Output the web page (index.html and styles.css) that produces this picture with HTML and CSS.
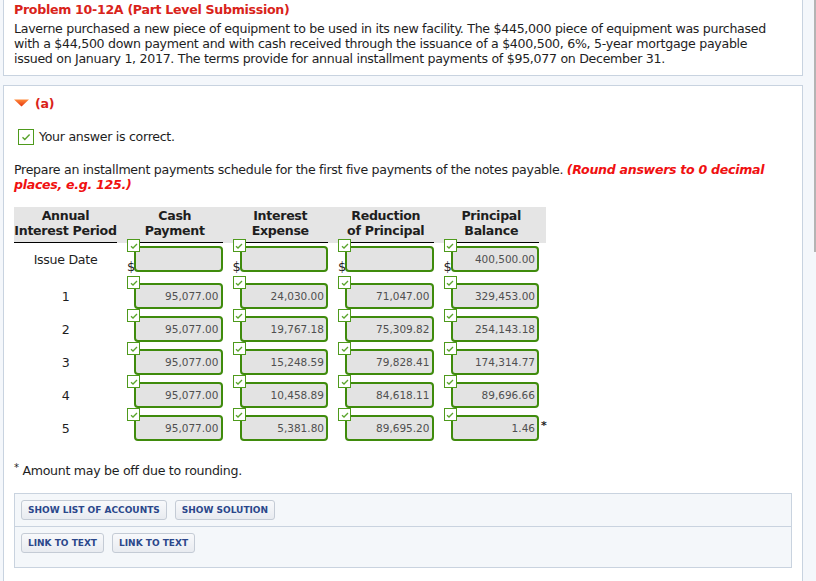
FILE: index.html
```html
<!DOCTYPE html>
<html>
<head>
<meta charset="utf-8">
<link rel="stylesheet" href="styles.css">
</head>
<body>
<div class="scroll-thumb"></div>
<div class="page">
  <div class="box box-top">
    <h1 class="title">Problem 10-12A (Part Level Submission)</h1>
    <p class="intro">Laverne purchased a new piece of equipment to be used in its new facility. The $445,000 piece of equipment was purchased<br>with a $44,500 down payment and with cash received through the issuance of a $400,500, 6%, 5-year mortgage payable<br>issued on January 1, 2017. The terms provide for annual installment payments of $95,077 on December 31.</p>
  </div>
  <div class="box box-part">
    <div class="part-head">
      <svg class="tri" width="15" height="8" viewBox="0 0 15 8"><defs><linearGradient id="tg" x1="0" y1="0" x2="0" y2="1"><stop offset="0" stop-color="#ff8a3a"/><stop offset="1" stop-color="#e5330f"/></linearGradient></defs><polygon points="0,0.5 15,0.5 7.5,7.5" fill="url(#tg)"/></svg>
      <span class="part-label">(a)</span>
    </div>
    <div class="status">
      <span class="bigcheck"><svg width="12" height="12" viewBox="0 0 12 12"><path d="M2.5 6.2 L4.8 8.4 L9.6 3.6" fill="none" stroke="#56a22a" stroke-width="1.4"/></svg></span>
      <span>Your answer is correct.</span>
    </div>
    <p class="prompt">Prepare an installment payments schedule for the first five payments of the notes payable. <em class="note">(Round answers to 0 decimal<br>places, e.g. 125.)</em></p>

    <div class="schedule">
      <div class="grid head">
        <div class="hc first"><div class="hi">Annual<br>Interest Period</div></div>
        <div class="hc"><div class="hi">Cash<br>Payment</div></div>
        <div class="hc"><div class="hi">Interest<br>Expense</div></div>
        <div class="hc"><div class="hi">Reduction<br>of Principal</div></div>
        <div class="hc"><div class="hi">Principal<br>Balance</div></div>
        <div class="hc spacer"></div>
      </div>

      <div class="grid row row-first">
        <div class="lbl">Issue Date</div>
        <div class="cell"><span class="cur">$</span><div class="fld"><span class="ok"></span></div></div>
        <div class="cell"><span class="cur">$</span><div class="fld"><span class="ok"></span></div></div>
        <div class="cell"><span class="cur">$</span><div class="fld"><span class="ok"></span></div></div>
        <div class="cell"><span class="cur">$</span><div class="fld"><span class="ok"></span>400,500.00</div></div>
        <div class="mark"></div>
      </div>
      <div class="grid row">
        <div class="lbl">1</div>
        <div class="cell"><span class="cur"></span><div class="fld"><span class="ok"></span>95,077.00</div></div>
        <div class="cell"><span class="cur"></span><div class="fld"><span class="ok"></span>24,030.00</div></div>
        <div class="cell"><span class="cur"></span><div class="fld"><span class="ok"></span>71,047.00</div></div>
        <div class="cell"><span class="cur"></span><div class="fld"><span class="ok"></span>329,453.00</div></div>
        <div class="mark"></div>
      </div>
      <div class="grid row">
        <div class="lbl">2</div>
        <div class="cell"><span class="cur"></span><div class="fld"><span class="ok"></span>95,077.00</div></div>
        <div class="cell"><span class="cur"></span><div class="fld"><span class="ok"></span>19,767.18</div></div>
        <div class="cell"><span class="cur"></span><div class="fld"><span class="ok"></span>75,309.82</div></div>
        <div class="cell"><span class="cur"></span><div class="fld"><span class="ok"></span>254,143.18</div></div>
        <div class="mark"></div>
      </div>
      <div class="grid row">
        <div class="lbl">3</div>
        <div class="cell"><span class="cur"></span><div class="fld"><span class="ok"></span>95,077.00</div></div>
        <div class="cell"><span class="cur"></span><div class="fld"><span class="ok"></span>15,248.59</div></div>
        <div class="cell"><span class="cur"></span><div class="fld"><span class="ok"></span>79,828.41</div></div>
        <div class="cell"><span class="cur"></span><div class="fld"><span class="ok"></span>174,314.77</div></div>
        <div class="mark"></div>
      </div>
      <div class="grid row">
        <div class="lbl">4</div>
        <div class="cell"><span class="cur"></span><div class="fld"><span class="ok"></span>95,077.00</div></div>
        <div class="cell"><span class="cur"></span><div class="fld"><span class="ok"></span>10,458.89</div></div>
        <div class="cell"><span class="cur"></span><div class="fld"><span class="ok"></span>84,618.11</div></div>
        <div class="cell"><span class="cur"></span><div class="fld"><span class="ok"></span>89,696.66</div></div>
        <div class="mark"></div>
      </div>
      <div class="grid row">
        <div class="lbl">5</div>
        <div class="cell"><span class="cur"></span><div class="fld"><span class="ok"></span>95,077.00</div></div>
        <div class="cell"><span class="cur"></span><div class="fld"><span class="ok"></span>5,381.80</div></div>
        <div class="cell"><span class="cur"></span><div class="fld"><span class="ok"></span>89,695.20</div></div>
        <div class="cell"><span class="cur"></span><div class="fld"><span class="ok"></span>1.46</div></div>
        <div class="mark">*</div>
      </div>
    </div>

    <p class="footnote"><sup class="star">*</sup> Amount may be off due to rounding.</p>

    <div class="tools">
      <div class="tool-row">
        <button class="btn">SHOW LIST OF ACCOUNTS</button>
        <button class="btn">SHOW SOLUTION</button>
      </div>
      <div class="tool-row last">
        <button class="btn">LINK TO TEXT</button>
        <button class="btn">LINK TO TEXT</button>
      </div>
    </div>
  </div>
</div>
</body>
</html>
```

FILE: styles.css
```css
html, body {
  margin: 0;
  padding: 0;
}
body {
  background: #f4f7fb;
  font-family: "DejaVu Sans", Verdana, sans-serif;
  font-size: 12.6px;
  letter-spacing: -0.3px;
  color: #1e1e1e;
  overflow: hidden;
  height: 581px;
}
.scroll-thumb {
  position: fixed;
  right: 0;
  top: 0;
  width: 2px;
  height: 252px;
  background: #b4b4b4;
}
.page {
  width: 800px;
  margin-left: 3px;
}
.box {
  background: #fff;
  border: 1px solid #c8d3e0;
  padding: 0 10px;
}
.box-top {
  border-top: none;
  padding-top: 2px;
  padding-bottom: 9px;
}
.title {
  margin: 0 0 3px;
  font-size: 12.6px;
  line-height: 16px;
  font-weight: bold;
  color: #d9231a;
}
.intro {
  margin: 0;
  line-height: 15px;
  white-space: nowrap;
}
.box-part {
  margin-top: 9px;
  padding-top: 10px;
  height: 520px;
  box-sizing: border-box;
}
.part-head {
  display: flex;
  align-items: center;
  gap: 6px;
  line-height: 15px;
}
.tri {
  display: block;
  margin-top: -1px;
}
.part-label {
  font-weight: bold;
  color: #d9231a;
}
.status {
  display: flex;
  align-items: center;
  gap: 5px;
  margin-top: 18px;
  margin-left: 4px;
  line-height: 16px;
}
.bigcheck {
  width: 16px;
  height: 16px;
  box-sizing: border-box;
  border: 1.5px solid #4e9a1c;
  background: #fff;
  display: flex;
  align-items: center;
  justify-content: center;
}
.prompt {
  margin: 17px 0 0;
  line-height: 15px;
  white-space: nowrap;
}
.note {
  font-weight: bold;
  color: #f01010;
}
.schedule {
  margin-top: 15px;
}
.grid {
  display: grid;
  grid-template-columns: 103px 105.5px 105.5px 105.5px 105.5px 8px;
}
.head {
  background: #e5e5e5;
  width: 532px;
}
.hc {
  padding-left: 10px;
  padding-top: 1px;
  display: flex;
}
.hc.first {
  padding-left: 0;
}
.hi {
  flex: 1;
  text-align: center;
  font-weight: bold;
  line-height: 15px;
  padding-bottom: 4px;
  border-bottom: 1px solid #000;
  white-space: nowrap;
}
.hc.spacer {
  padding-left: 0;
}
.row {
  margin-top: 7px;
}
.row-first {
  margin-top: 3px;
  padding-bottom: 4px;
}
.lbl {
  display: flex;
  align-items: center;
  justify-content: center;
  height: 26px;
}
.cell {
  display: flex;
  align-items: flex-end;
  padding-left: 10px;
}
.cur {
  width: 7px;
  font-size: 13px;
  line-height: 11px;
  letter-spacing: 0;
}
.fld {
  position: relative;
  flex: 1;
  height: 26px;
  box-sizing: border-box;
  border: 2px solid #3f8b0c;
  border-radius: 4px;
  background: #e3e3e3;
  text-align: right;
  padding-right: 2px;
  font-size: 10.5px;
  letter-spacing: 0;
  line-height: 22px;
  color: #505050;
}
.ok {
  position: absolute;
  left: -9px;
  top: -9px;
  width: 13px;
  height: 13px;
  box-sizing: border-box;
  border: 1.5px solid #4e9a1c;
  background: #fff url("data:image/svg+xml;utf8,<svg xmlns='http://www.w3.org/2000/svg' width='10' height='10' viewBox='0 0 10 10'><path d='M2 5.2 L4 7 L8 3' fill='none' stroke='%235aa52c' stroke-width='1.3'/></svg>") center no-repeat;
}
.mark {
  padding-left: 2px;
  padding-top: 6px;
  font-size: 11px;
  line-height: 10px;
  font-weight: bold;
  letter-spacing: 0;
}
.footnote {
  margin: 22px 0 0;
  line-height: 15px;
}
.star {
  font-size: 10px;
  vertical-align: 4px;
  line-height: 0;
}
.tools {
  margin-top: 15px;
  background: #f4f7fa;
  border: 1px solid #c9d3df;
}
.tool-row {
  display: flex;
  gap: 8px;
  padding: 6px 6px 6px;
  border-bottom: 1px solid #c9d3df;
}
.tool-row.last {
  border-bottom: none;
  padding-bottom: 14px;
}
.btn {
  height: 20px;
  padding: 0 6px;
  border: 1px solid #c4cbd5;
  border-radius: 3px;
  background: linear-gradient(#f8f9fb, #e8ebf0);
  font-family: "DejaVu Sans", Verdana, sans-serif;
  font-weight: bold;
  font-size: 9px;
  letter-spacing: 0;
  color: #2b478b;
  line-height: 18px;
}
```
